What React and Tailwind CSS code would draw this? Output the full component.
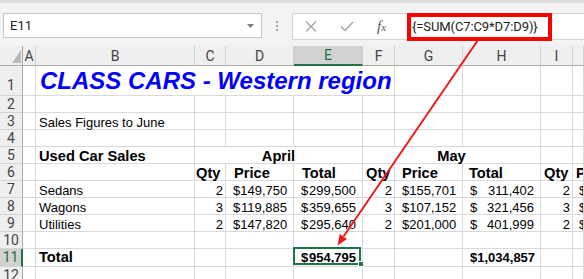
import React from "react";

function C({ children, r = true, c = "" }) {
  return (
    <div
      className={
        (r ? "border-r " : "") +
        "border-b border-[#d9d9d9] flex items-end whitespace-nowrap min-w-0 " +
        c
      }
    >
      {children}
    </div>
  );
}

function RH({ n, sel = false, pb = "pb-[1px]" }) {
  return (
    <div
      className={
        "flex items-end justify-center border-b border-[#d4d4d4] text-[14px] leading-[14px] font-['Roboto',sans-serif] " +
        pb +
        " " +
        (sel
          ? "bg-[#d2d2d2] text-[#217346] border-r-2 border-r-[#217346]"
          : "bg-[#efefef] text-[#444] border-r border-r-[#ababab]")
      }
    >
      {n}
    </div>
  );
}

function CH({ l, sel = false }) {
  return (
    <div
      className={
        "flex items-center justify-center text-[14px] leading-[14px] font-['Roboto',sans-serif] border-r border-[#d4d4d4] " +
        (sel
          ? "bg-[#d2d2d2] text-[#217346] border-b-2 border-b-[#217346]"
          : "bg-[#efefef] text-[#444] border-b border-b-[#ababab]")
      }
    >
      {l}
    </div>
  );
}

function Empty({ n }) {
  return Array.from({ length: n }).map((_, i) => <C key={i} />);
}

function Acc({ v, bold = false, pl = "pl-[7px]" }) {
  return (
    <C c={"justify-between pr-[6px] text-[13px] leading-[13px] " + pl + (bold ? " font-bold pb-[2px]" : "")}>
      <span>$</span>
      <span>{v}</span>
    </C>
  );
}

function Num({ v }) {
  return <C c="justify-end pr-[2px] text-[13px] leading-[13px]">{v}</C>;
}

function Hd({ t, pl }) {
  return <C c={"font-bold text-[14.67px] leading-[14px] " + pl}>{t}</C>;
}

function DataRow({ n, name, a, b, c, d, e, f, g }) {
  return (
    <>
      <RH n={n} />
      <C />
      <C c="pl-[3px] text-[13px] leading-[13px]">{name}</C>
      <Num v={a} />
      <Acc v={b} />
      <Acc v={c} />
      <Num v={d} />
      <Acc v={e} />
      <Acc v={f} />
      <Num v={g} />
      <C c="pl-[6px] text-[13px] leading-[13px] overflow-hidden">$</C>
    </>
  );
}

function Toolbar() {
  return (
    <div className="h-[46px] bg-[#f3f3f3] border-t-[3px] border-[#dcdcdc] flex items-start pt-[10px] font-['Roboto',sans-serif]">
      <div className="ml-[3px] w-[259px] h-[25px] bg-white border border-[#c6c6c6] flex items-center justify-between pl-[6px] pr-[7px] text-[13px] text-[#222]">
        <span>E11</span>
        <svg width="7" height="4" viewBox="0 0 7 4">
          <path d="M0 0H7L3.5 4Z" fill="#7a7a7a" />
        </svg>
      </div>
      <div className="w-[30px] h-[25px] flex flex-col items-center justify-center gap-[2px]">
        <div className="w-[2px] h-[2px] bg-[#a6a6a6]" />
        <div className="w-[2px] h-[2px] bg-[#a6a6a6]" />
        <div className="w-[2px] h-[2px] bg-[#a6a6a6]" />
      </div>
      <div className="w-[292px] h-[27px] bg-white border-l border-y border-[#d4d4d4] flex items-center">
        <svg className="ml-[12px]" width="12" height="11" viewBox="0 0 12 11">
          <path d="M1 0.5L11 10.5M11 0.5L1 10.5" stroke="#a3a3a3" strokeWidth="1.3" fill="none" />
        </svg>
        <svg className="ml-[23px]" width="14" height="11" viewBox="0 0 14 11">
          <path d="M1 5.5L5 9.5L13 1" stroke="#a3a3a3" strokeWidth="1.4" fill="none" />
        </svg>
        <div className="ml-[23px] w-[12px] text-[15px] leading-[15px] italic text-[#555] font-['Liberation_Serif',serif]">
          f<span className="text-[11px]">x</span>
        </div>
        <div className="ml-[18px] w-[145px] h-[28px] border-4 border-[#ff0000] flex items-center pl-[1px] text-[13px] tracking-[-0.1px] text-[#222] whitespace-nowrap">
          {"{=SUM(C7:C9*D7:D9)}"}
        </div>
      </div>
    </div>
  );
}

function Sheet() {
  return (
    <div className="grid grid-cols-[23px_13px_159px_31px_68px_69px_32px_68px_78px_32px_1fr] grid-rows-[20px_30px_17px_17px_17px_17px_17px_17px_17px_17px_17px_18px_17px]">
      <div className="bg-[#efefef] border-r border-b border-[#ababab] relative">
        <svg className="absolute left-[12px] top-[4px]" width="9" height="13" viewBox="0 0 9 13">
          <path d="M9 0V13H0Z" fill="#b9b9b9" />
        </svg>
      </div>
      <CH l="A" />
      <CH l="B" />
      <CH l="C" />
      <CH l="D" />
      <CH l="E" sel />
      <CH l="F" />
      <CH l="G" />
      <CH l="H" />
      <CH l="I" />
      <CH l="" />

      <RH n="1" pb="pb-[3px]" />
      <C />
      <C c="col-span-5 pl-[4px] pb-[2px] text-[24px] leading-[24px] font-bold italic text-[#0000ff]">
        CLASS CARS - Western region
      </C>
      <Empty n={4} />

      <RH n="2" />
      <Empty n={10} />

      <RH n="3" />
      <C />
      <C c="pl-[3px] text-[13px] leading-[13px]">Sales Figures to June</C>
      <Empty n={8} />

      <RH n="4" />
      <Empty n={10} />

      <RH n="5" />
      <C />
      <C c="pl-[3px] font-bold text-[14.67px] leading-[14px]">Used Car Sales</C>
      <C c="col-span-3 justify-center font-bold text-[14.67px] leading-[14px]">April</C>
      <C c="col-span-3 justify-center font-bold text-[14.67px] leading-[14px]">May</C>
      <Empty n={2} />

      <RH n="6" />
      <C />
      <C />
      <Hd t="Qty" pl="pl-[1px]" />
      <Hd t="Price" pl="pl-[8px]" />
      <Hd t="Total" pl="pl-[8px]" />
      <Hd t="Qty" pl="pl-[3px]" />
      <Hd t="Price" pl="pl-[7px]" />
      <Hd t="Total" pl="pl-[6px]" />
      <Hd t="Qty" pl="pl-[3px]" />
      <C c="font-bold text-[14.67px] leading-[14px] pl-[3px] overflow-hidden">Price</C>

      <DataRow n="7" name="Sedans" a="2" b="149,750" c="299,500" d="2" e="155,701" f="311,402" g="2" />
      <DataRow n="8" name="Wagons" a="3" b="119,885" c="359,655" d="3" e="107,152" f="321,456" g="3" />
      <DataRow n="9" name="Utilities" a="2" b="147,820" c="295,640" d="2" e="201,000" f="401,999" g="2" />

      <RH n="10" />
      <Empty n={10} />

      <RH n="11" sel pb="pb-[2px]" />
      <C />
      <C c="pl-[3px] pb-[2px] font-bold text-[14.67px] leading-[14px]">Total</C>
      <C />
      <C />
      <div className="relative border-r border-b border-[#d9d9d9] flex items-end justify-between pl-[7px] pr-[6px] pb-[2px] text-[13px] leading-[13px] font-bold">
        <span>$</span>
        <span>954,795</span>
        <div className="absolute left-[-1px] top-[-2px] right-[1px] bottom-[1px] border-2 border-[#217346]" />
        <div className="absolute right-[-2px] bottom-[-1px] w-[6px] h-[6px] bg-[#217346] border border-white" />
      </div>
      <C />
      <C />
      <Acc v="1,034,857" bold />
      <C />
      <C />

      <RH n="12" />
      <Empty n={10} />
    </div>
  );
}

export default function App() {
  return (
    <div className="relative w-[584px] h-[279px] overflow-hidden bg-white font-['Liberation_Sans',Arial,sans-serif] text-black">
      <Toolbar />
      <Sheet />
      <svg className="absolute left-0 top-0 pointer-events-none" width="584" height="279" viewBox="0 0 584 279">
        <line x1="478" y1="40" x2="343.5" y2="236.5" stroke="#ee1a1a" strokeWidth="2" />
        <polygon points="337.5,245.5 347,239 339.8,234" fill="#ee1a1a" />
      </svg>
    </div>
  );
}
